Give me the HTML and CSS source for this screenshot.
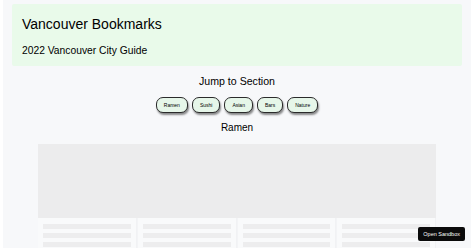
FILE: index.html
```html
<!DOCTYPE html>
<html lang="en">
<head>
    <meta charset="UTF-8">
    <title>Vancouver Bookmarks</title>
    <link rel="stylesheet" href="styles.css">
</head>
<body>
    <div class="page">
        <!-- 头部 -->
        <div class="header">
            <h1 class="title">Vancouver Bookmarks</h1>
            <p class="subtitle">2022 Vancouver City Guide</p>
        </div>
        <h2 class="jump">Jump to Section</h2>
        <div class="nav">
            <span class="pill">Ramen</span>
            <span class="pill">Sushi</span>
            <span class="pill">Asian</span>
            <span class="pill">Bars</span>
            <span class="pill">Nature</span>
        </div>
        <h2 class="section">Ramen</h2>
        <div class="block">
            <div class="photo"></div>
            <div class="cards">
                <div class="card"><div class="line"></div><div class="line"></div><div class="line"></div></div>
                <div class="card"><div class="line"></div><div class="line"></div><div class="line"></div></div>
                <div class="card"><div class="line"></div><div class="line"></div><div class="line"></div></div>
                <div class="card"><div class="line"></div><div class="line"></div><div class="line"></div></div>
            </div>
        </div>
    </div>
    <a class="sandbox">Open Sandbox</a>
</body>
</html>
```

FILE: styles.css
```css
body{
    margin: 0;
    background: #fff;
    font-family: "Liberation Sans", Arial, sans-serif;
    color: #000;
    overflow: hidden;
}
.page{
    margin: 0 3px;
    padding: 4px 9px 0;
    height: 244px;
    background: #f7f8fa;
    overflow: hidden;
}
.header{
    background: #e9faea;
    height: 62px;
    padding: 0 10px;
    border-radius: 2px;
}
.title{
    margin: 0;
    padding-top: 12px;
    font-size: 14px;
    font-weight: normal;
    line-height: 16px;
}
.subtitle{
    margin: 13px 0 0;
    font-size: 10.3px;
    line-height: 12px;
}
.jump{
    margin: 9px 0 0;
    text-align: center;
    font-size: 10.6px;
    font-weight: normal;
    line-height: 13px;
}
.nav{
    display: flex;
    justify-content: center;
    gap: 4px;
    margin-top: 9px;
}
.pill{
    display: inline-block;
    height: 14px;
    line-height: 14px;
    padding: 0 7px;
    font-size: 5px;
    border: 1px solid #2b2b2b;
    border-radius: 7px;
    background: #e6f6e9;
    box-shadow: 1px 2px 2px rgba(0,0,0,.45);
}
.section{
    margin: 9px 0 0;
    text-align: center;
    font-size: 10px;
    font-weight: normal;
    line-height: 12px;
}
.block{
    width: 398px;
    margin: 10px auto 0;
}
.photo{
    height: 74px;
    background: #ececed;
}
.cards{
    display: grid;
    grid-template-columns: repeat(4, 1fr);
    gap: 1px;
    background: #f3f4f6;
}
.card{
    background: #f9fafb;
    padding: 6px 5px 0;
    border-right: 1px solid #f1f2f4;
}
.line{
    height: 5px;
    background: #ededee;
    margin-bottom: 4px;
}
.sandbox{
    position: absolute;
    right: 9px;
    bottom: 7px;
    background: #0b0b0b;
    color: #fff;
    font-size: 5.5px;
    padding: 4px 5px;
    border-radius: 2px;
}
```
